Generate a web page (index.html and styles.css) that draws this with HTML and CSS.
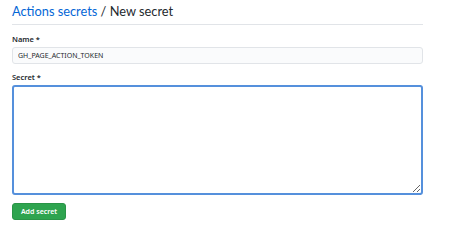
FILE: index.html
```html
<html lang="en">
<head>
    <meta charset="UTF-8">
    <meta name="viewport" content="width=device-width, initial-scale=1.0">
    <title>New secret</title>
    <link rel="stylesheet" href="styles.css">
</head>
<body>
    <div class="container">
        <div class="subhead">
            <h2><a href="#">Actions secrets</a> / New secret</h2>
        </div>

        <form class="secret-form">
            <div class="form-group">
                <label for="secret_name">Name *</label>
                <input id="secret_name" class="form-control" type="text" value="GH_PAGE_ACTION_TOKEN">
            </div>
            <div class="form-group">
                <label for="secret_value">Secret *</label>
                <textarea id="secret_value" class="form-control secret-value"></textarea>
            </div>
            <button type="button" class="btn-primary">Add secret</button>
        </form>
    </div>
</body>
</html>
```

FILE: styles.css
```css
body {
    font-family: "Noto Sans", "Liberation Sans", sans-serif;
    margin: 0;
    padding: 0;
    background-color: #fff;
    color: #24292e;
}

.container {
    width: 411px;
    padding: 0 12px;
}

.subhead {
    border-bottom: 1px solid #e1e4e8;
    padding-bottom: 3px;
    margin-bottom: 9px;
}

.subhead h2 {
    font-family: Lato, "Noto Sans", sans-serif;
    font-size: 12.8px;
    font-weight: 400;
    margin: 0;
    line-height: 20px;
    padding-top: 1px;
}

.subhead a {
    color: #0366d6;
    text-decoration: none;
}

.form-group {
    margin-bottom: 8px;
}

.form-group label {
    display: block;
    font-size: 7.5px;
    font-weight: 600;
    line-height: 10px;
    margin-bottom: 3px;
}

.form-control {
    display: block;
    box-sizing: border-box;
    width: 100%;
    height: 17px;
    padding: 0 5px;
    font-family: inherit;
    font-size: 7px;
    color: #24292e;
    background-color: #fafbfc;
    border: 1px solid #e1e4e8;
    border-radius: 3px;
    outline: none;
}

.secret-value {
    height: 110px;
    background-color: #fff;
    border: 2px solid #5590dc;
    resize: vertical;
}

.btn-primary {
    display: block;
    height: 17px;
    width: 54px;
    margin-top: 1px;
    padding: 0;
    font-family: inherit;
    font-size: 7px;
    font-weight: 600;
    color: #fff;
    background-color: #2ea44f;
    border: 1px solid #2a9447;
    border-radius: 3px;
    cursor: pointer;
}
```
